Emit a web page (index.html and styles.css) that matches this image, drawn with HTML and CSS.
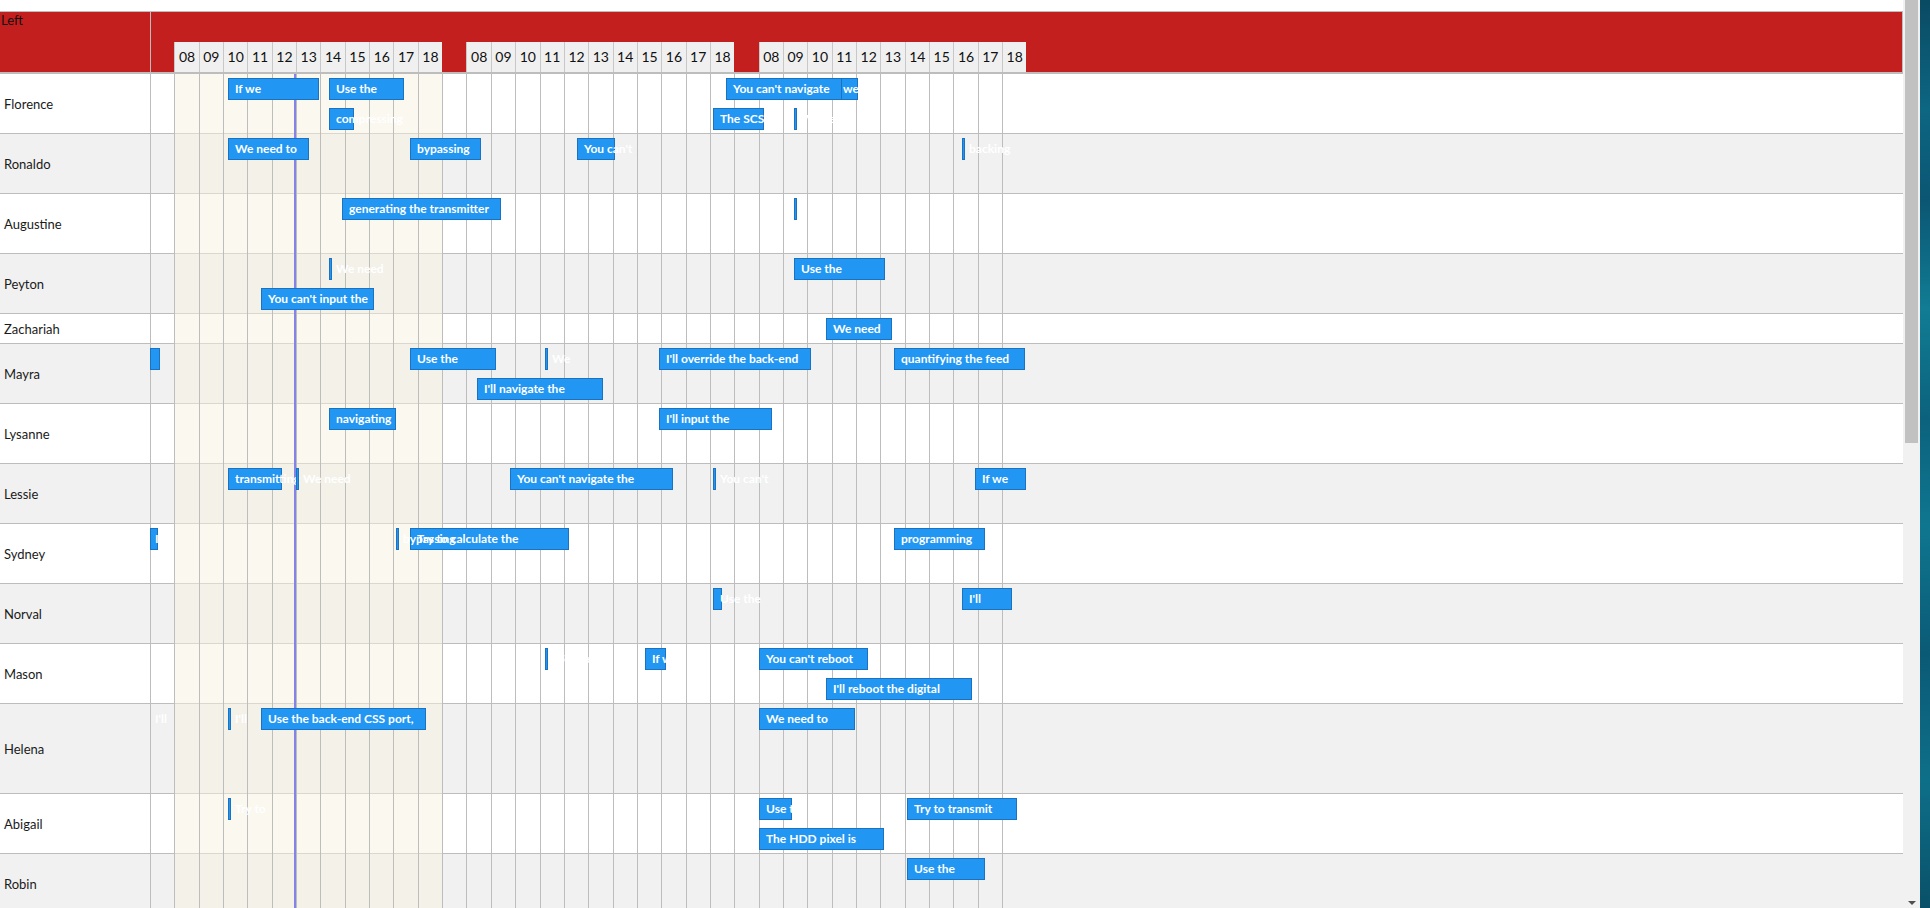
FILE: index.html
```html
<!DOCTYPE html>
<html>
<head>
<meta charset="utf-8">
<title>Scheduler</title>
<link rel="stylesheet" href="styles.css">
</head>
<body>
<div class="window">
  <div class="viewport">
    <div class="scheduler">
      <div class="sch-header">
        <div class="hdr-left">Left</div>
        <div class="hdr-right">
          <div class="hours">
            <div class="gap"></div>
            <div class="hour">08</div><div class="hour">09</div><div class="hour">10</div><div class="hour">11</div><div class="hour">12</div><div class="hour">13</div><div class="hour">14</div><div class="hour">15</div><div class="hour">16</div><div class="hour">17</div><div class="hour">18</div>
            <div class="gap"></div>
            <div class="hour">08</div><div class="hour">09</div><div class="hour">10</div><div class="hour">11</div><div class="hour">12</div><div class="hour">13</div><div class="hour">14</div><div class="hour">15</div><div class="hour">16</div><div class="hour">17</div><div class="hour">18</div>
            <div class="gap"></div>
            <div class="hour">08</div><div class="hour">09</div><div class="hour">10</div><div class="hour">11</div><div class="hour">12</div><div class="hour">13</div><div class="hour">14</div><div class="hour">15</div><div class="hour">16</div><div class="hour">17</div><div class="hour">18</div>
          </div>
        </div>
      </div>

      <div class="sch-body">
        <div class="row h2 odd">
          <div class="name">Florence</div>
          <div class="lanes">
            <div class="ev lane0" style="left:78px;width:91px">If we</div>
            <div class="ev lane0" style="left:179px;width:75px">Use the</div>
            <div class="ev lane1" style="left:179px;width:25px">compressing</div>
            <div class="ev lane0" style="left:576px;width:116px">You can't navigate</div>
            <div class="ev lane0 snug" style="left:691px;width:17px">we</div>
            <div class="ev lane1" style="left:563px;width:51px">The SCS</div>
            <div class="ev lane1" style="left:644px;width:3px">We need</div>
          </div>
        </div>
        <div class="row h2 even">
          <div class="name">Ronaldo</div>
          <div class="lanes">
            <div class="ev lane0" style="left:78px;width:81px">We need to</div>
            <div class="ev lane0" style="left:260px;width:71px">bypassing</div>
            <div class="ev lane0" style="left:427px;width:38px">You can't</div>
            <div class="ev lane0" style="left:812px;width:3px">backing</div>
          </div>
        </div>
        <div class="row h2 odd">
          <div class="name">Augustine</div>
          <div class="lanes">
            <div class="ev lane0" style="left:192px;width:159px">generating the transmitter</div>
            <div class="ev lane0" style="left:644px;width:3px"></div>
          </div>
        </div>
        <div class="row h2 even">
          <div class="name">Peyton</div>
          <div class="lanes">
            <div class="ev lane0" style="left:179px;width:3px">We need</div>
            <div class="ev lane1" style="left:111px;width:113px">You can't input the</div>
            <div class="ev lane0" style="left:644px;width:91px">Use the</div>
          </div>
        </div>
        <div class="row h1 odd">
          <div class="name">Zachariah</div>
          <div class="lanes">
            <div class="ev lane0" style="left:676px;width:66px">We need</div>
          </div>
        </div>
        <div class="row h2 even">
          <div class="name">Mayra</div>
          <div class="lanes">
            <div class="ev lane0" style="left:0px;width:10px"></div>
            <div class="ev lane0" style="left:260px;width:86px">Use the</div>
            <div class="ev lane0" style="left:395px;width:3px">We</div>
            <div class="ev lane0" style="left:509px;width:152px">I'll override the back-end</div>
            <div class="ev lane0" style="left:744px;width:131px">quantifying the feed</div>
            <div class="ev lane1" style="left:327px;width:126px">I'll navigate the</div>
          </div>
        </div>
        <div class="row h2 odd">
          <div class="name">Lysanne</div>
          <div class="lanes">
            <div class="ev lane0" style="left:179px;width:67px">navigating</div>
            <div class="ev lane0" style="left:509px;width:113px">I'll input the</div>
          </div>
        </div>
        <div class="row h2 even">
          <div class="name">Lessie</div>
          <div class="lanes">
            <div class="ev lane0" style="left:78px;width:54px">transmitting</div>
            <div class="ev lane0" style="left:146px;width:3px">We need</div>
            <div class="ev lane0" style="left:360px;width:163px">You can't navigate the</div>
            <div class="ev lane0" style="left:563px;width:3px">You can't</div>
            <div class="ev lane0" style="left:825px;width:51px">If we</div>
          </div>
        </div>
        <div class="row h2 odd">
          <div class="name">Sydney</div>
          <div class="lanes">
            <div class="ev lane0 tight" style="left:0px;width:8px">I've</div>
            <div class="ev lane0" style="left:260px;width:159px">Try to calculate the</div>
            <div class="ev lane0" style="left:246px;width:3px">bypassing</div>
            <div class="ev lane0" style="left:744px;width:91px">programming</div>
          </div>
        </div>
        <div class="row h2 even">
          <div class="name">Norval</div>
          <div class="lanes">
            <div class="ev lane0" style="left:563px;width:9px">Use the</div>
            <div class="ev lane0" style="left:812px;width:50px">I'll</div>
          </div>
        </div>
        <div class="row h2 odd">
          <div class="name">Mason</div>
          <div class="lanes">
            <div class="ev lane0" style="left:395px;width:3px">We need</div>
            <div class="ev lane0" style="left:495px;width:21px">If we</div>
            <div class="ev lane0" style="left:609px;width:109px">You can't reboot</div>
            <div class="ev lane1" style="left:676px;width:146px">I'll reboot the digital</div>
          </div>
        </div>
        <div class="row h3 even">
          <div class="name">Helena</div>
          <div class="lanes">
            <div class="ev lane0 ghost" style="left:-2px;width:0px">I'll</div>
            <div class="ev lane0" style="left:78px;width:3px">I'll</div>
            <div class="ev lane0" style="left:111px;width:165px">Use the back-end CSS port,</div>
            <div class="ev lane0" style="left:609px;width:96px">We need to</div>
          </div>
        </div>
        <div class="row h2 odd">
          <div class="name">Abigail</div>
          <div class="lanes">
            <div class="ev lane0" style="left:78px;width:3px">Try to</div>
            <div class="ev lane0" style="left:609px;width:33px">Use the</div>
            <div class="ev lane0" style="left:757px;width:110px">Try to transmit</div>
            <div class="ev lane1" style="left:609px;width:125px">The HDD pixel is</div>
          </div>
        </div>
        <div class="row h2 even">
          <div class="name">Robin</div>
          <div class="lanes">
            <div class="ev lane0" style="left:757px;width:78px">Use the</div>
          </div>
        </div>

        <div class="overlay">
          <div class="col"></div>
          <div class="col shade"></div><div class="col shade"></div><div class="col shade"></div><div class="col shade"></div><div class="col shade"></div><div class="col shade"></div><div class="col shade"></div><div class="col shade"></div><div class="col shade"></div><div class="col shade"></div><div class="col shade"></div>
          <div class="col"></div>
          <div class="col"></div><div class="col"></div><div class="col"></div><div class="col"></div><div class="col"></div><div class="col"></div><div class="col"></div><div class="col"></div><div class="col"></div><div class="col"></div><div class="col"></div>
          <div class="col"></div>
          <div class="col"></div><div class="col"></div><div class="col"></div><div class="col"></div><div class="col"></div><div class="col"></div><div class="col"></div><div class="col"></div><div class="col"></div><div class="col"></div><div class="col last"></div>
          <div class="now"></div>
        </div>
      </div>
    </div>
  </div>
  <div class="vscroll">
    <div class="thumb"></div>
    <div class="arrow"></div>
  </div>
  <div class="desktop"></div>
</div>
</body>
</html>
```

FILE: styles.css
```css
html, body {
  margin: 0;
  padding: 0;
  background: #ffffff;
  overflow: hidden;
}

body {
  font-family: Lato, "Open Sans", "Liberation Sans", sans-serif;
  color: #1a1a1a;
}

.window {
  display: flex;
  width: 1930px;
  height: 908px;
  overflow: hidden;
}

.viewport {
  width: 1903px;
  height: 908px;
  flex: none;
  overflow: hidden;
  padding-top: 11px;
  box-sizing: border-box;
  background: #ffffff;
}

.scheduler {
  width: 1903px;
}

/* ---------- header ---------- */
.sch-header {
  display: flex;
  height: 63px;
  box-sizing: border-box;
  border-top: 1px solid #bdbdbd;
  border-bottom: 2px solid #bdbdbd;
  border-right: 1px solid #bdbdbd;
  background: #c41f1f;
}

.hdr-left {
  width: 150px;
  flex: none;
  font-size: 13px;
  line-height: 15px;
  padding-left: 1px;
  padding-top: 1px;
  color: #111;
  box-sizing: border-box;
}

.hdr-right {
  flex: 1;
  border-left: 1px solid #bdbdbd;
}

.hours {
  display: grid;
  grid-template-columns: 23.35px repeat(35, 24.35px);
  height: 30px;
  margin-top: 30px;
}

.hour {
  background: #f0f0f0;
  border-left: 1px solid #c8c8c8;
  font-size: 14px;
  line-height: 30px;
  text-align: center;
  color: #111;
}

.gap {
  background: transparent;
}

/* ---------- body ---------- */
.sch-body {
  position: relative;
}

.row {
  display: flex;
  box-sizing: border-box;
  border-bottom: 1px solid #bdbdbd;
}

.row.odd { background: #ffffff; }
.row.even { background: #f1f1f1; }

.row.h1 { height: 30px; }
.row.h2 { height: 60px; }
.row.h3 { height: 90px; }

.name {
  width: 150px;
  flex: none;
  display: flex;
  align-items: center;
  padding-left: 4px;
  box-sizing: border-box;
  font-size: 13px;
  color: #1a1a1a;
}

.lanes {
  position: relative;
  flex: 1;
}

.ev {
  position: absolute;
  z-index: 2;
  height: 22px;
  box-sizing: border-box;
  background: #2196f3;
  border: 1px solid #1a72c0;
  color: #ffffff;
  font-size: 12px;
  font-weight: bold;
  line-height: 19px;
  text-indent: 6px;
  white-space: nowrap;
  overflow: visible;
}

.ev.tight { text-indent: 4px; }
.ev.snug { text-indent: 1px; }

.ev.ghost {
  background: transparent;
  border-color: transparent;
}

.lane0 { top: 4px; }
.lane1 { top: 34px; }
.lane2 { top: 64px; }

.overlay {
  position: absolute;
  top: 0;
  bottom: 0;
  left: 150px;
  width: 877px;
  display: grid;
  grid-template-columns: repeat(36, 24.35px);
  z-index: 1;
  pointer-events: none;
}

.col {
  border-left: 1px solid #bdbdbd;
}

.col.shade {
  background: rgba(247, 242, 226, 0.5);
}

.now {
  position: absolute;
  left: 144px;
  top: 0;
  bottom: 0;
  width: 2px;
  background: #8484e6;
}

/* ---------- scrollbar ---------- */
.vscroll {
  width: 17px;
  flex: none;
  height: 908px;
  background: #f1f1f1;
  display: flex;
  flex-direction: column;
  justify-content: space-between;
}

.thumb {
  margin: 0 2px;
  height: 443px;
  background: #c1c1c1;
}

.arrow {
  width: 0;
  height: 0;
  margin: 0 auto 3px;
  border-left: 4px solid transparent;
  border-right: 4px solid transparent;
  border-top: 4px solid #505050;
}

/* ---------- desktop strip ---------- */
.desktop {
  width: 10px;
  flex: none;
  height: 908px;
  background: linear-gradient(180deg, #0a4a63 0%, #0d6682 12%, #0b5673 22%, #117c94 34%, #0c627d 46%, #0f7690 58%, #0b5a75 72%, #0e6f89 86%, #0a5068 100%);
}
```
